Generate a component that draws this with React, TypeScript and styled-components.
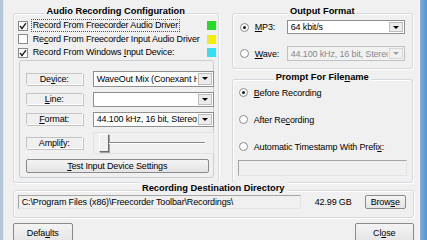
import React from "react";
import styled, { createGlobalStyle } from "styled-components";

const Global = createGlobalStyle`
  html, body { margin: 0; padding: 0; background: #f0f0f0; }
  body {
    font-family: "Liberation Sans", Arial, sans-serif;
    font-size: 9px;
    letter-spacing: -0.15px;
    color: #000;
  }
`;

const Window = styled.div`
  width: 427px;
  height: 240px;
  display: flex;
  flex-direction: column;
  overflow: hidden;
  background: #bfd3e6;
`;

const TitleStrip = styled.div`
  height: 3px;
  display: flex;
  justify-content: flex-end;
  background: linear-gradient(#c9dbea, #b6cadd);
`;

const CloseTab = styled.div`
  width: 12px;
  margin-right: 7px;
  background: #c9504a;
  border-radius: 0 0 2px 2px;
`;

const Body = styled.div`
  flex: 1;
  display: flex;
`;

const Edge = styled.div<{ w: number; tone: string }>`
  width: ${({ w }) => w}px;
  background: ${({ tone }) => tone};
`;

const Dialog = styled.div`
  flex: 1;
  background: #f0f0f0;
  padding: 7px 5px 0 9px;
  border-left: 1px solid #dfe6ee;
  border-right: 1px solid #f8fbff;
  display: flex;
  flex-direction: column;
`;

const TopRow = styled.div`
  display: flex;
  gap: 13px;
`;

const Group = styled.div<{ w?: number; h: number }>`
  width: ${({ w }) => (w ? `${w}px` : "auto")};
  height: ${({ h }) => h}px;
  box-sizing: border-box;
  border: 1px solid #d3d9de;
  border-radius: 3px;
  box-shadow: inset 1px 1px 0 #fff, 1px 1px 0 #fff;
  margin-top: 6px;
  display: flex;
  flex-direction: column;
`;

const GroupTitle = styled.div`
  align-self: center;
  margin-top: -9px;
  padding: 0 2px;
  background: #f0f0f0;
  font-weight: bold;
  font-size: 9.3px;
  letter-spacing: 0;
  line-height: 13px;
  white-space: nowrap;
`;

const CheckList = styled.div`
  padding-top: 1px;
  display: flex;
  flex-direction: column;
`;

const CheckRow = styled.div`
  display: flex;
  align-items: center;
  height: 13.5px;
  padding: 0 0 0 4px;
`;

const CheckBox = styled.span`
  flex-shrink: 0;
  width: 8px;
  height: 8px;
  border: 1px solid #8a8a8a;
  background: #fff;
  display: flex;
  align-items: center;
  justify-content: center;
  margin-right: 4px;
`;

const RowText = styled.span<{ focus?: boolean }>`
  white-space: nowrap;
  line-height: 11px;
  padding: 0 1px;
  ${({ focus }) => (focus ? "outline: 1px dotted #555;" : "")}
`;

const Swatch = styled.span<{ c: string }>`
  flex-shrink: 0;
  width: 9px;
  height: 9px;
  background: ${({ c }) => c};
  margin-right: 2px;
  margin-left: auto;
`;

const Inner = styled.div`
  margin: 0 4px 0 5px;
  height: 118px;
  box-sizing: border-box;
  border: 1px solid #c9ced2;
  border-radius: 3px;
  padding: 10px 0 0 6px;
  display: grid;
  grid-template-columns: 57px 121px;
  column-gap: 10px;
  grid-template-rows: 16px 15px 15px 22px 14px;
  row-gap: 5px;
  align-items: center;
`;

const FieldLabel = styled.div`
  height: 10px;
  border: 1px solid #c4c4c4;
  border-right-color: #fff;
  border-bottom-color: #fff;
  box-shadow: 1px 1px 0 #c4c4c4;
  display: flex;
  align-items: center;
  justify-content: center;
  line-height: 10px;
`;

const Combo = styled.div<{ disabled?: boolean }>`
  height: 100%;
  box-sizing: border-box;
  border: 1px solid ${({ disabled }) => (disabled ? "#c2c2c2" : "#8e8f8f")};
  background: ${({ disabled }) => (disabled ? "#f2f2f2" : "#fff")};
  color: ${({ disabled }) => (disabled ? "#8a8a8a" : "#000")};
  display: flex;
  align-items: center;
  overflow: hidden;
`;

const ComboText = styled.span`
  flex: 1;
  padding-left: 3px;
  white-space: nowrap;
  overflow: hidden;
`;

const DropBtn = styled.span<{ disabled?: boolean }>`
  flex-shrink: 0;
  width: 12px;
  align-self: stretch;
  margin: 1px;
  background: ${({ disabled }) => (disabled ? "#f0f0f0" : "#ececec")};
  border: 1px solid ${({ disabled }) => (disabled ? "#d8d8d8" : "#bdbdbd")};
  display: flex;
  align-items: center;
  justify-content: center;
  &::after {
    content: "";
    border-left: 3px solid transparent;
    border-right: 3px solid transparent;
    border-top: 3px solid ${({ disabled }) => (disabled ? "#a0a0a0" : "#000")};
  }
`;

const Slider = styled.div`
  height: 100%;
  border: 1px solid #e3e3e3;
  display: flex;
  align-items: center;
  padding: 0 8px 0 5px;
  box-sizing: border-box;
`;

const Thumb = styled.span`
  width: 8px;
  height: 16px;
  background: #f0f0f0;
  border: 1px solid #fff;
  border-right-color: #6d6d6d;
  border-bottom-color: #6d6d6d;
  box-shadow: 1px 1px 0 #a0a0a0;
`;

const Track = styled.span`
  flex: 1;
  height: 1px;
  background: #8a8a8a;
  border-bottom: 1px solid #fff;
`;

const Button = styled.div<{ w?: number; h?: number }>`
  ${({ w }) => (w ? `width: ${w}px;` : "")}
  height: ${({ h }) => h ?? 14}px;
  box-sizing: border-box;
  border: 1px solid #8a8a8a;
  border-radius: 2px;
  background: linear-gradient(#f4f4f4, #e4e4e4);
  display: flex;
  align-items: center;
  justify-content: center;
  white-space: nowrap;
`;

const WideButton = styled(Button)`
  grid-column: 1 / 3;
  margin-right: 5px;
`;

const RightCol = styled.div`
  display: flex;
  flex-direction: column;
`;

const FormatGrid = styled.div`
  display: grid;
  grid-template-columns: 47px 118px;
  grid-template-rows: 14px 15px;
  row-gap: 12px;
  padding: 2px 0 0 7px;
  align-items: center;
`;

const RadioLabel = styled.div`
  display: flex;
  align-items: center;
  white-space: nowrap;
`;

const Radio = styled.span<{ on?: boolean }>`
  flex-shrink: 0;
  width: 7px;
  height: 7px;
  border-radius: 50%;
  border: 1px solid #8c8c8c;
  background: #fff;
  margin-right: 6px;
  display: flex;
  align-items: center;
  justify-content: center;
  &::after {
    content: "";
    width: 3px;
    height: 3px;
    border-radius: 50%;
    background: ${({ on }) => (on ? "#1a1a1a" : "transparent")};
  }
`;

const PromptList = styled.div`
  display: flex;
  flex-direction: column;
  padding: 2px 0 0 6px;
  gap: 14px;
`;

const PromptRow = styled.div`
  display: flex;
  align-items: center;
  height: 13px;
  white-space: nowrap;
`;

const TextField = styled.div<{ w: number; h?: number }>`
  width: ${({ w }) => w}px;
  height: ${({ h }) => h ?? 14}px;
  box-sizing: border-box;
  border: 1px solid #a5a5a5;
  border-right-color: #e4e4e4;
  border-bottom-color: #e4e4e4;
  background: #f0f0f0;
  display: flex;
  align-items: center;
  padding-left: 3px;
  white-space: nowrap;
  overflow: hidden;
`;

const PrefixField = styled(TextField)`
  margin: 7px 0 0 5px;
`;

const DestGroup = styled(Group)`
  margin-top: 7px;
`;

const PromptGroup = styled(Group)`
  margin-top: 10px;
`;

const DestRow = styled.div`
  display: flex;
  align-items: center;
  padding: 0 7px 0 4px;
`;

const Size = styled.span`
  margin-left: 14px;
  width: 50px;
`;

const ButtonRow = styled.div`
  display: flex;
  justify-content: space-between;
  margin-top: 5px;
`;

const U = styled.span`
  text-decoration: underline;
`;

const Check = () => (
  <svg width="8" height="8" viewBox="0 0 8 8">
    <path d="M1 4 L3 6.5 L7 1.2" stroke="#222" strokeWidth="1.4" fill="none" />
  </svg>
);

const App = () => (
  <Window>
    <Global />
    <TitleStrip>
      <CloseTab />
    </TitleStrip>
    <Body>
      <Edge w={3} tone="#b3c6d8" />
      <Dialog>
        <TopRow>
          <Group w={206} h={170}>
            <GroupTitle>Audio Recording Configuration</GroupTitle>
            <CheckList>
              <CheckRow>
                <CheckBox>
                  <Check />
                </CheckBox>
                <RowText focus>Record From Freecorder Audio Driver</RowText>
                <Swatch c="#22dd22" />
              </CheckRow>
              <CheckRow>
                <CheckBox />
                <RowText>
                  Re<U>c</U>ord From Freecorder Input Audio Driver
                </RowText>
                <Swatch c="#f2ee0a" />
              </CheckRow>
              <CheckRow>
                <CheckBox>
                  <Check />
                </CheckBox>
                <RowText>
                  Record From Windows <U>I</U>nput Device:
                </RowText>
                <Swatch c="#33e0f2" />
              </CheckRow>
            </CheckList>
            <Inner>
              <FieldLabel>
                De<U>v</U>ice:
              </FieldLabel>
              <Combo>
                <ComboText>WaveOut Mix (Conexant HD Audio)</ComboText>
                <DropBtn />
              </Combo>
              <FieldLabel>
                <U>L</U>ine:
              </FieldLabel>
              <Combo>
                <ComboText />
                <DropBtn />
              </Combo>
              <FieldLabel>
                <U>F</U>ormat:
              </FieldLabel>
              <Combo>
                <ComboText>44.100 kHz, 16 bit, Stereo</ComboText>
                <DropBtn />
              </Combo>
              <FieldLabel>
                Ampli<U>f</U>y:
              </FieldLabel>
              <Slider>
                <Thumb />
                <Track />
              </Slider>
              <WideButton>
                <span>
                  <U>T</U>est Input Device Settings
                </span>
              </WideButton>
            </Inner>
          </Group>
          <RightCol>
            <Group w={181} h={56}>
              <GroupTitle>Output Format</GroupTitle>
              <FormatGrid>
                <RadioLabel>
                  <Radio on />
                  <span>
                    <U>M</U>P3:
                  </span>
                </RadioLabel>
                <Combo>
                  <ComboText>64 kbit/s</ComboText>
                  <DropBtn />
                </Combo>
                <RadioLabel>
                  <Radio />
                  <span>
                    <U>W</U>ave:
                  </span>
                </RadioLabel>
                <Combo disabled>
                  <ComboText>44.100 kHz, 16 bit, Stereo</ComboText>
                  <DropBtn disabled />
                </Combo>
              </FormatGrid>
            </Group>
            <PromptGroup w={181} h={104}>
              <GroupTitle>
                Prompt For File<U>n</U>ame
              </GroupTitle>
              <PromptList>
                <PromptRow>
                  <Radio on />
                  <span>
                    <U>B</U>efore Recording
                  </span>
                </PromptRow>
                <PromptRow>
                  <Radio />
                  <span>
                    After Re<U>c</U>ording
                  </span>
                </PromptRow>
                <PromptRow>
                  <Radio />
                  <span>
                    Automatic Timestamp With Prefi<U>x</U>:
                  </span>
                </PromptRow>
              </PromptList>
              <PrefixField w={169} h={16} />
            </PromptGroup>
          </RightCol>
        </TopRow>
        <DestGroup h={28}>
          <GroupTitle>Recording Destination Directory</GroupTitle>
          <DestRow>
            <TextField w={283}>C:\Program Files (x86)\Freecorder Toolbar\Recordings\</TextField>
            <Size>42.99 GB</Size>
            <Button w={41}>
              <span>
                Brow<U>s</U>e
              </span>
            </Button>
          </DestRow>
        </DestGroup>
        <ButtonRow>
          <Button w={60} h={20}>
            <span>
              Defa<U>u</U>lts
            </span>
          </Button>
          <Button w={59} h={20}>
            <span>
              Cl<U>o</U>se
            </span>
          </Button>
        </ButtonRow>
      </Dialog>
      <Edge w={8} tone="linear-gradient(90deg, #7fb1dd, #4f93cf)" />
    </Body>
  </Window>
);

export default App;
